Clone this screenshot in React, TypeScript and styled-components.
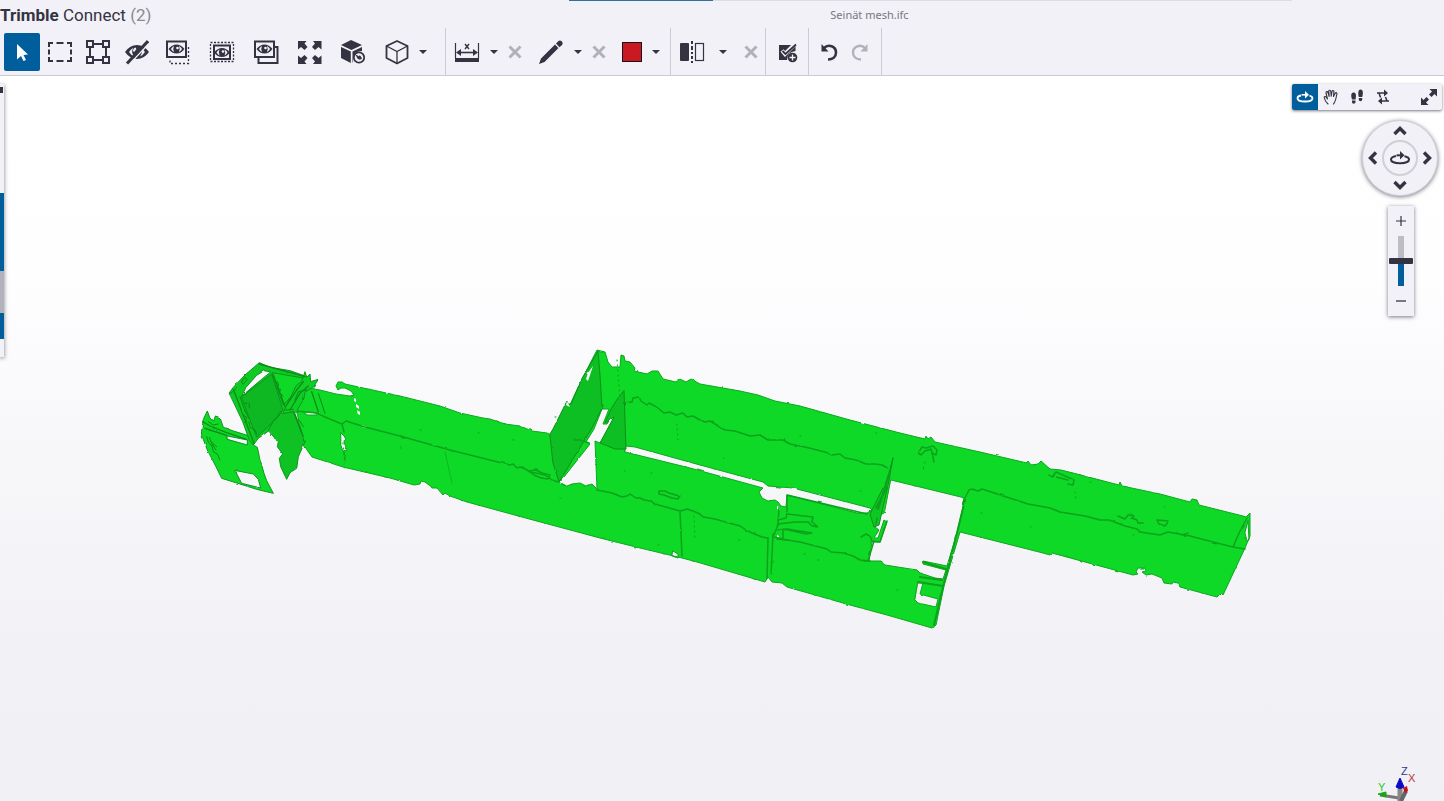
import React, { useState } from "react";
import styled, { createGlobalStyle } from "styled-components";

const INK = "#343342";
const BLUE = "#005e9c";
const PANEL = "#f2f1f7";
const LINE = "#cacbd4";

const GlobalStyle = createGlobalStyle`
  * { box-sizing: border-box; }
  body { margin: 0; background: #f0f0f5; color: ${INK}; font-family: Roboto, "Liberation Sans", sans-serif; }
  button { font: inherit; color: inherit; border: 0; padding: 0; background: none; cursor: pointer; }
`;

const Page = styled.div`
  display: flex;
  flex-direction: column;
  min-height: 100vh;
`;

const Header = styled.header`
  background: ${PANEL};
  border-bottom: 1px solid ${LINE};
`;

const LoadStrip = styled.div`
  display: grid;
  grid-template-columns: 569fr 144fr 579fr 152fr;
  height: 1px;
`;

const LoadPart = styled.div<{ $color: string; $column: number }>`
  grid-column: ${(p) => p.$column};
  background: ${(p) => p.$color};
`;

const TitleRow = styled.div`
  display: grid;
  grid-template-columns: 57.5% 1fr;
  align-items: center;
  height: 27px;
`;

const Brand = styled.h1`
  margin: 0;
  font-size: 17px;
  line-height: 26px;
  font-weight: 400;
  white-space: nowrap;
`;

const Count = styled.span`
  color: #8a8a93;
`;

const FileName = styled.span`
  font-family: "Noto Sans", sans-serif;
  font-size: 11px;
  line-height: 26px;
  color: #77777f;
`;

const Toolbar = styled.div`
  display: flex;
  height: 47px;
`;

const Group = styled.div<{ $gap?: number; $pad: string }>`
  display: flex;
  align-items: center;
  gap: ${(p) => p.$gap ?? 0}px;
  padding: ${(p) => p.$pad};
  border-right: 1px solid ${LINE};
`;

const Cluster = styled.div<{ $gap: number }>`
  display: flex;
  align-items: center;
  gap: ${(p) => p.$gap}px;
`;

const ToolButton = styled.button<{ $width?: number; $active?: boolean }>`
  display: grid;
  place-items: center;
  width: ${(p) => p.$width ?? 36}px;
  height: 38px;
  border-radius: 2px;
  color: ${(p) => (p.$active ? "#fff" : INK)};
  background: ${(p) => (p.$active ? BLUE : "transparent")};
  &:disabled { color: #b1b1b9; cursor: default; }
`;

const Swatch = styled.span`
  width: 20px;
  height: 20px;
  background: #c91a22;
  border: 1px solid #16151d;
`;

const Viewport = styled.main`
  flex: 1;
  display: grid;
  grid-template: minmax(320px, 1fr) / minmax(0, 1fr);
  background: linear-gradient(#fff 0%, #fefeff 28%, #f8f8fb 48%, #f2f2f6 78%, #f0f0f5 100%);
  overflow: hidden;
  & > * { grid-area: 1 / 1; }
`;

const ModelView = styled.svg`
  width: 100%;
  height: 100%;
  min-height: 0;
`;

const SidePanel = styled.aside`
  display: flex;
  flex-direction: column;
  align-self: start;
  width: 4px;
  height: 273px;
  margin-top: 8px;
  padding-top: 3px;
  background: ${PANEL};
  box-shadow: 0 1px 4px rgba(30, 30, 50, 0.6);
  z-index: 1;
`;

const SideBlock = styled.div<{ $height: number; $color: string; $width?: number }>`
  width: ${(p) => p.$width ?? 4}px;
  height: ${(p) => p.$height}px;
  background: ${(p) => p.$color};
`;

const Controls = styled.div`
  display: flex;
  flex-direction: column;
  align-items: flex-end;
  align-self: start;
  justify-self: end;
  gap: 10px;
  padding: 8px 2px;
`;

const NavBar = styled.div`
  display: flex;
  width: 150px;
  height: 26px;
  border-radius: 2px;
  background: ${PANEL};
  box-shadow: 0 1px 3px rgba(30, 30, 50, 0.6);
`;

const NavButton = styled.button<{ $active?: boolean; $end?: boolean }>`
  display: grid;
  place-items: center;
  width: 26px;
  height: 26px;
  margin-left: ${(p) => (p.$end ? "auto" : "0")};
  border-radius: 2px 0 0 2px;
  color: ${(p) => (p.$active ? "#fff" : INK)};
  background: ${(p) => (p.$active ? BLUE : "transparent")};
`;

const Dial = styled.div`
  display: grid;
  grid-template: 20px 34px 20px / 20px 34px 20px;
  place-items: center;
  place-content: center;
  width: 76px;
  height: 76px;
  margin-right: 4px;
  border: 1px solid #d0d0d6;
  border-radius: 50%;
  background: ${PANEL};
  box-shadow: 0 1px 4px rgba(30, 30, 50, 0.6);
`;

const DialButton = styled.button<{ $area: string; $hub?: boolean }>`
  grid-area: ${(p) => p.$area};
  display: grid;
  place-items: center;
  width: ${(p) => (p.$hub ? 36 : 18)}px;
  height: ${(p) => (p.$hub ? 36 : 18)}px;
  border: ${(p) => (p.$hub ? "2px solid #cfcfd6" : "0")};
  border-radius: 50%;
`;

const ZoomBox = styled.div`
  display: flex;
  flex-direction: column;
  align-items: center;
  width: 26px;
  height: 110px;
  margin-right: 28px;
  background: ${PANEL};
  box-shadow: 0 1px 4px rgba(30, 30, 50, 0.6);
`;

const ZoomButton = styled.button`
  display: grid;
  place-items: center;
  width: 26px;
  height: 30px;
`;

const ZoomSlider = styled.input`
  appearance: none;
  writing-mode: vertical-lr;
  direction: rtl;
  width: 24px;
  height: 50px;
  margin: 0;
  background: linear-gradient(#bcbec4 50%, ${BLUE} 50%) center / 6px 100% no-repeat;
  &::-webkit-slider-thumb {
    appearance: none;
    width: 24px;
    height: 6px;
    border-radius: 1px;
    background: ${INK};
  }
`;

const Axes = styled.svg`
  align-self: end;
  justify-self: end;
  width: 74px;
  height: 38px;
  font-family: "Liberation Sans", sans-serif;
  font-size: 11px;
`;

const Icon = ({ size = 26, children }: { size?: number; children: React.ReactNode }) => (
  <svg width={size} height={size} viewBox={`0 0 ${size} ${size}`} fill="none" stroke="currentColor" strokeWidth="2" aria-hidden="true">
    {children}
  </svg>
);

const Eye = ({ x, y }: { x: number; y: number }) => (
  <g transform={`translate(${x} ${y})`} stroke="none">
    <path fill="currentColor" fillRule="evenodd" d="M-8 0Q-4.500-4.500 0-4.500T8 0Q4.500 4.500 0 4.500T-8 0ZM-5.500 0Q-4.500 2-2.500 3Q-4-0.500-2.500-3Q-4.500-2-5.500 0ZM5.500 0Q4.500-2 2.500-3Q4 0.500 2.500 3Q4.500 2 5.500 0Z" />
    <circle cx="1" cy="-1" r="1.300" fill={PANEL} />
  </g>
);

const Caret = ({ label }: { label: string }) => (
  <ToolButton $width={14} aria-label={label}>
    <Icon size={10}><path d="M1 3H9L5 7Z" fill="currentColor" stroke="none" /></Icon>
  </ToolButton>
);

const Clear = ({ label }: { label: string }) => (
  <ToolButton $width={20} disabled aria-label={label}>
    <Icon size={14}><path d="M1.500 1.500L12.500 12.500M12.500 1.500L1.500 12.500" strokeWidth="3" /></Icon>
  </ToolButton>
);

const OrbitIcon = () => (
  <Icon size={20}>
    <path d="M6 8C3 8.600 1 9.800 1 11.400C1 13.700 5 15.200 10 15.200S19 13.700 19 11.400C19 10 17.500 8.800 14.500 8.200" />
    <path d="M6.500 7.300H11" />
    <path d="M10 3L14.500 7.300L10 11.500Z" fill="currentColor" stroke="none" />
  </Icon>
);

const Chevron = ({ turn }: { turn: number }) => (
  <Icon size={16}><path d="M2.500 11L8 5.500L13.500 11" strokeWidth="3.400" transform={`rotate(${turn} 8 8)`} /></Icon>
);

const Model = () => (
  <ModelView viewBox="0 76 1444 725" preserveAspectRatio="xMidYMid slice" role="img" aria-label="Wall mesh model">
    <defs>
      <filter id="rough" x="-2%" y="-2%" width="104%" height="104%">
        <feTurbulence type="fractalNoise" baseFrequency="0.12" numOctaves="2" seed="4" />
        <feDisplacementMap in="SourceGraphic" scale="2" xChannelSelector="R" yChannelSelector="G" />
      </filter>
    </defs>
    <g filter="url(#rough)" strokeLinejoin="round" strokeLinecap="round">
      {/* long walls, with the openings between them */}
      <path
        fill="#0bd926" stroke="#0aa51d" strokeWidth="1" fillRule="evenodd"
        d="M297 411L308 388L320 390L336 394L350 396L354 395L351 391L345 388L341 388L338 390L336 386L338 382L342 382L345 384L400 396L420 401L440 406L460 413L483 418L490 419L505 424L520 426L532 431L547 433L551 435L566 404L569 407L580 383L597 350L605 352L608 362L612 367L620 367L621 355L624 356L625 361L630 362L635 368L634 371L647 374L652 371L658 371L663 379L676 382L680 379L686 382L691 379L700 384L740 391L758 395L775 401L800 406L850 420L900 433L925 439L926 436L928 439L931 437L935 442L980 452L1027 463L1028 461L1031 465L1038 464L1041 461L1050 469L1061 470L1073 473L1119 485L1120 482L1122 486L1160 494L1190 502L1192 499L1197 500L1199 505L1243 516L1246 517L1250 513L1250 536L1245 548L1223 595L1221 593L1217 597L1180 587L1178 583L1173 582L1172 584L1164 583L1162 578L1152 574L1146 575L1142 572L1146 571L1145 568L1138 568L1136 572L1138 574L1133 575L1052 553L1050 555L1043 553L960 532L944 586L936 625L932 628L887 615L850 605L787 587L782 583L772 582L768 577L765 582L697 562L682 558L640 548L600 538L533 520L467 502L450 496L445 493L443 495L437 488L433 488L425 482L421 481L420 484L414 485L390 478L343 467L312 457L307 450L303 443Z
        M560 482L590 444L586 442L594 429L602 409L609 409L603 424L607 424L615 411L615 416L600 443L595 441L597 489L592 484L586 486L580 483L572 484L567 486Z
        M626 446L635 447L700 465L763 482L768 486L793 488L870 508L872 510L867 513L857 513L787 495L786 507L781 506L778 502L775 500L768 501L762 498L759 492L763 488L690 468L625 452Z
        M891 480L965 498L957 533L947 566L923 561L923 564L946 570L943 579L935 578L920 573L917 570L885 565L880 561L869 561L872 542L880 542L887 522L884 520L878 538L874 538L879 530L875 527L876 517L884 513Z
        M918 583L923 583L920 594L938 599L936 607L918 603L915 600Z
        M673 551L678 554L678 558L672 556Z M341 433L345 437L344 442L347 450L343 451L341 446Z M303 412L316 413L317 415L308 415Z M1248 521L1249 540L1247 541L1245 533Z"
      />
      {/* small gaps in the left wall */}
      <path fill="#fbfbfd" d="M354 398L356 399V402L354 401ZM356 404L359 406L359 409L356 407ZM357 410L360 412L360 415L358 414ZM362 425L367 427L366 428L362 427ZM777 506L780 507V510L777 509ZM777 535L779 536V538L777 537Z" />
      {/* shaded walls facing away */}
      <g fill="#0bbf22" stroke="#098f1b" strokeWidth="1">
        <path d="M550 434L553 429L565 405L567 401L568 404L571 404L578 388L580 382L587 370L598 351L600 375L602 408L592 428L559 482L553 463Z" />
        <path d="M624 391L626 449L615 449L600 443L614 417L605 423L611 409L618 398Z" />
        <path fill="#0bc824" d="M893 458L889 480L879 525L874 527L870 514L877 500L887 480Z" />
      </g>
      <path fill="#fff" d="M593 366L588 373L586 379L588 381L590 375ZM567 401L570 407L566 405Z" />

      {/* end room on the left */}
      <g transform="translate(190 350) scale(0.333333)">
        <g stroke="#0a941c" strokeWidth="3">
          <path fill="#0bd926" fillRule="evenodd" d="M35 242L40 208L52 183L60 205L72 212L76 198L90 203L100 232L130 243L172 256L190 285L202 292L208 320L216 348L222 370L230 392L250 430L200 418L150 402L95 385L78 350L52 300L35 255ZM112 258L172 270L172 285L112 268ZM138 362L190 372L205 388L212 414L155 400L142 375Z" />
          <path fill="#0acb23" fillRule="evenodd" d="M118 128L130 112L165 75L208 38L240 52L300 62L345 78L360 92L320 170L280 180L240 240L205 265L190 285L178 270L158 215ZM155 138L168 112L200 76L222 62L242 66L215 88Z" />
          <path fill="#0ab820" d="M155 140L245 72L262 125L278 180L240 225L200 262L180 210Z" />
          <path fill="#0bd926" d="M248 68L345 85L335 105L280 165L262 115Z" />
          <path fill="#0ac222" d="M235 240L250 215L275 190L312 184L330 230L345 275L325 320L320 355L300 368L290 388L272 350L268 325L278 312L262 290L265 275L255 265Z" />
          <path fill="#0bcf25" d="M278 190L300 145L320 105L335 95L345 65L350 82L360 72L362 95L385 88L370 112L345 125L340 150L320 182Z" />
        </g>
        <g fill="none" stroke="#088b19">
          <path strokeWidth="4" d="M130 118L192 280M208 42L345 80M250 75L285 170M38 215L60 228L110 248L170 268M45 235L60 240L110 256M312 188L345 275M365 125L385 185M300 180L330 130L355 108M290 165L320 120L340 95" />
          <path strokeWidth="3" d="M120 132L140 115M155 95L165 82L172 88L160 102ZM315 150L325 125L350 120M262 95L266 105L262 112L272 118L268 128L280 138M165 160Q182 155 178 172M160 195L170 202L166 212L178 218L180 232L195 240L200 252M50 260L56 280L66 288L70 305L82 312L90 330M58 262L66 282L78 300M62 275L80 290M55 215L70 225L85 222M325 205L340 230M385 130L405 190M285 180L310 178M150 140L162 175L176 205" />
        </g>
      </g>

      {/* edges and cracks drawn on the walls */}
      <g fill="none" stroke="#0ba21e" strokeWidth="1.500">
        <path d="M297 411L317 413L325 417L337 422L342 424L346 421L365 427L400 436L450 450L510 465L513 464L517 468L522 467L530 472L536 473L545 475L552 480L558 482M342 424L344 432M344 452L345 460M597 490L612 493L622 497L627 496L630 494L636 498L640 498L644 500L650 501L655 504L680 511L684 510L687 509L693 511L700 514L703 517L715 519L740 526L746 530L752 533L762 537L768 538M774 537L787 540L800 542L827 549L831 552L844 553L853 556L860 560L870 561" />
        <path d="M623 403L632 402L633 398L639 397L641 401L647 405L649 403L655 406L658 408L664 413L670 412L676 415L683 413L687 417L693 416L700 420L705 422L710 421L725 430L735 431L750 436L760 435L768 440L783 440L790 444L805 447L825 452L832 455L840 454L845 458L856 460L866 464L875 464L882 465L888 468" />
        <path d="M965 498L969 490L972 489L978 491L982 489L1028 504L1050 508L1060 512L1085 516L1100 520L1109 520L1125 526L1137 529L1140 532L1160 535L1168 532L1190 536L1233 547L1245 549M1233 547L1240 531L1247 518" />
        <path d="M787 495V512M787 495L867 514M768 538L767 579M773 534L771 574M779 507L778 525L774 535M680 511L682 556" />
        <path d="M659 491L665 491L669 493L679 496L678 499L672 498L664 495L659 494ZM529 471L536 470L542 473L550 475L548 479L541 478L534 475ZM574 440L580 440L589 443" />
        <path d="M778 520L786 518L787 514L813 517L812 522L818 527L812 526L808 522L795 522L778 524M778 530L788 529L793 530L812 533L806 534L784 529M783 529V540M777 539L788 540" />
        <path d="M861 537L866 534L870 536L872 541L880 542L887 521M877 518L876 524" />
        <path d="M919 452L922 447L926 448L933 446L937 450L936 455L932 453M919 452L921 455L925 451L931 449L933 457L934 462M1049 475L1052 477L1056 472L1074 480L1073 485L1068 484M1056 477L1068 480M1118 516L1125 519L1129 514L1134 516L1132 518L1137 520L1138 523L1143 523M1157 520L1169 521L1165 526L1159 524ZM1182 535L1188 533" />
        <path strokeWidth="2" d="M923 562L946 569M918 582L943 586M920 577L942 580" />
        <path strokeWidth="2" d="M889 474L881 500L878 510M887 487L876 508M965 500L957 533L944 583L934 625" />
        <path d="M863 561L868 561L874 541" />
      </g>
      <g fill="none" stroke="#0ba21e" strokeWidth="1">
        <path strokeDasharray="1 4" d="M343 443L345 468M617 360L620 398M677 424L678 442M694 516L695 540M1075 492L1076 500M925 462L923 470" />
        <path strokeWidth="1" opacity="0.6" d="M445 452L452 483" />
        <path d="M513 440H514M478 433H479M555 417H556M420 430H421M624 471H625M651 473H652M723 458H724M860 491H861M777 525H778M804 554H805M818 560H819M981 513H982M1030 527H1031M1133 535H1134M1164 507H1165M658 545H659M560 498H561M400 448H401M800 436H801M876 433H877M1090 482H1091M897 590H898M739 540H740" />
      </g>
    </g>
  </ModelView>
);

export default function App() {
  const [zoom, setZoom] = useState(50);
  return (
    <Page>
      <GlobalStyle />
      <Header>
        <LoadStrip>
          <LoadPart $column={2} $color="#2f7299" />
          <LoadPart $column={3} $color="#dddde4" />
        </LoadStrip>
        <TitleRow>
          <Brand><b>Trimble</b> Connect <Count>(2)</Count></Brand>
          <FileName>Seinät mesh.ifc</FileName>
        </TitleRow>
        <Toolbar role="toolbar" aria-label="Model tools">
          <Group $gap={6} $pad="0 15px 0 4px">
            <Cluster $gap={2}>
              <ToolButton $active aria-label="Select">
                <Icon><path d="M8 5L19 15.500L14.500 16L17 21L14.500 22L12 17L8 20.500Z" fill="currentColor" stroke="none" /></Icon>
              </ToolButton>
              <ToolButton aria-label="Rectangle select">
                <Icon><path d="M2 8V4H6M9.500 4H16.500M20 4H24V8M24 10.500V15.500M24 18V22H20M16.500 22H9.500M6 22H2V18M2 15.500V10.500" /></Icon>
              </ToolButton>
              <ToolButton aria-label="Polygon select">
                <Icon><path d="M2 2H8V8H2ZM18 2H24V8H18ZM2 18H8V24H2ZM18 18H24V24H18ZM8 5H18M8 21H18M5 8V18M21 8V18" /></Icon>
              </ToolButton>
              <ToolButton aria-label="Hide">
                <Icon>
                  <path fill="currentColor" stroke="none" fillRule="evenodd" d="M2 13Q7 6 14 6T26 13Q21 20 14 20T2 13ZM6 13Q8 16 11 17.500Q7.500 13 10.500 8.800Q7.800 10 6 13ZM22 13Q20 10 17.500 8.800Q20.500 13 17 17.500Q20 16 22 13Z" />
                  <path d="M13 9.500A3 3 0 0 0 11 12.500" stroke={PANEL} />
                  <path d="M6.500 25L26 4.500" stroke={PANEL} strokeWidth="1.500" />
                  <path d="M4 24.500L25 2" strokeWidth="3" />
                </Icon>
              </ToolButton>
            </Cluster>
            <Cluster $gap={0}>
              <Cluster $gap={8}>
                <ToolButton aria-label="Hide others">
                  <Icon><path d="M2 2.500H21V18H2Z" /><Eye x={11.5} y={10} /><path d="M23.500 8V24.500H5V20" strokeWidth="1.300" strokeDasharray="2 2" /></Icon>
                </ToolButton>
                <ToolButton aria-label="Isolate">
                  <Icon><path d="M1.500 3.500H24.500V22.500H1.500Z" strokeWidth="1.300" strokeDasharray="2 1.500" /><path d="M5 6.500H21V20H5Z" /><Eye x={13} y={13.5} /></Icon>
                </ToolButton>
                <ToolButton aria-label="Show all">
                  <Icon><path d="M2 2.500H21V18H2Z" /><Eye x={11.5} y={10} /><path d="M21 8H24.500V24H5.500V18" /></Icon>
                </ToolButton>
                <ToolButton aria-label="Fit to view">
                  <Icon>
                    <path fill="currentColor" stroke="none" d="M1 2H9.500L7.500 4.500L10.500 8L7.500 11L4 8L1 10.500ZM24.500 2H16L18 4.500L15 8L18 11L21.500 8L24.500 10.500ZM1 25H9.500L7.500 22.500L10.500 19L7.500 16L4 19L1 16.500ZM24.500 25H16L18 22.500L15 19L18 16L21.500 19L24.500 16.500Z" />
                  </Icon>
                </ToolButton>
                <ToolButton aria-label="Reset model">
                  <Icon>
                    <path fill="currentColor" stroke="none" d="M0 6L10 1L21 6L10.500 11ZM0 8L9.800 12.500V24L0 19ZM11.500 12.500L21 8V12Q13 12 12 19V23L11.500 24Z" />
                    <circle cx="18" cy="18.500" r="5.200" strokeWidth="1.800" />
                    <path d="M15.500 16L17 19Q19 21 20.500 18.500" strokeWidth="1.500" /><circle cx="18.500" cy="18" r="1.600" fill="currentColor" stroke="none" />
                  </Icon>
                </ToolButton>
                <ToolButton aria-label="View cube">
                  <Icon><path d="M12 2L22.500 7V19L12 24.500L1.500 19V7Z" strokeWidth="1.800" strokeLinejoin="round" /><path d="M1.500 7L12 12.500L22.500 7M12 12.500V24.500" strokeWidth="1.300" /></Icon>
                </ToolButton>
              </Cluster>
              <Caret label="View options" />
            </Cluster>
          </Group>

          <Group $gap={8} $pad="0 7px 0 3px">
            <Cluster $gap={4}>
              <Cluster $gap={2}>
                <ToolButton aria-label="Measure">
                  <Icon>
                    <path d="M1.500 4V19M24.500 4V19" strokeWidth="1.200" /><path d="M4 13.500H22" strokeWidth="1.600" />
                    <path d="M1 19H25V23H1ZM2 13.500L7 10V17ZM24 13.500L19 10V17Z" fill="currentColor" stroke="none" />
                    <path d="M11 5L15 10M15 5L11 10" strokeWidth="1.400" />
                  </Icon>
                </ToolButton>
                <Caret label="Measure options" />
              </Cluster>
              <Clear label="Clear measurements" />
            </Cluster>
            <Cluster $gap={4}>
              <Cluster $gap={2}>
                <ToolButton aria-label="Markup">
                  <Icon><path fill="currentColor" stroke="none" d="M1 25L3 19.500L17 5.500L20.500 9L6.500 23ZM18 4.500L20.500 2Q22 1 24 2.500Q25.500 4.500 24 6L21.500 8.200Z" /></Icon>
                </ToolButton>
                <Caret label="Markup options" />
              </Cluster>
              <Clear label="Clear markups" />
            </Cluster>
            <Cluster $gap={2}>
              <ToolButton $width={30} aria-label="Markup color"><Swatch /></ToolButton>
              <Caret label="Color options" />
            </Cluster>
          </Group>

          <Group $gap={11} $pad="0 4px 0 3px">
            <Cluster $gap={6}>
              <ToolButton aria-label="Clip plane">
                <Icon>
                  <rect x="1" y="4" width="9" height="18" rx="1" fill="currentColor" stroke="none" />
                  <path d="M13 2V5M13 7V11M13 13V15M13 17V20M13 22V24" />
                  <rect x="16.500" y="4.500" width="8" height="17" strokeWidth="1.200" />
                </Icon>
              </ToolButton>
              <Caret label="Clip plane options" />
            </Cluster>
            <Clear label="Clear clip planes" />
          </Group>

          <Group $pad="0 3px">
            <ToolButton aria-label="Add to-do">
              <Icon>
                <path d="M5 6H21.500V12Q13 13 13 21H5Z" fill="currentColor" stroke="none" />
                <path d="M8 11.500L11 15L21.500 4.500" stroke={PANEL} strokeWidth="4" />
                <path d="M8.500 12L11.500 15L22 5.500" strokeWidth="1.800" />
                <circle cx="18.500" cy="18.500" r="4.800" fill="currentColor" stroke="none" />
                <path d="M15.500 18.500H21.500M18.500 15.500V21.500" stroke={PANEL} strokeWidth="1.300" />
              </Icon>
            </ToolButton>
          </Group>

          <Group $gap={1} $pad="0 6px 0 5px">
            <ToolButton $width={30} aria-label="Undo">
              <Icon size={20}><path d="M5 6C9.500 1.500 17 4.500 17 10.500C17 15 13.500 17.500 9 17.500" strokeWidth="2.600" /><path d="M2.500 2V9.500H9.500Z" fill="currentColor" stroke="none" /></Icon>
            </ToolButton>
            <ToolButton $width={30} disabled aria-label="Redo">
              <Icon size={20}><path d="M15 6C10.500 1.500 3 4.500 3 10.500C3 15 6.500 17.500 11 17.500" strokeWidth="2.400" /><path d="M17.500 2V9.500H10.500Z" fill="currentColor" stroke="none" /></Icon>
            </ToolButton>
          </Group>
        </Toolbar>
      </Header>

      <Viewport>
        <Model />
        <SidePanel aria-label="Collapsed panel">
          <SideBlock $height={6} $width={3} $color={INK} />
          <SideBlock $height={100} $color="transparent" />
          <SideBlock $height={78} $color={BLUE} />
          <SideBlock $height={42} $color="#b2b3ba" />
          <SideBlock $height={26} $color={BLUE} />
        </SidePanel>
        <Controls>
          <NavBar role="toolbar" aria-label="Navigation">
            <NavButton $active aria-label="Orbit"><Icon size={18}><path strokeWidth="1.800" d="M5 7.500C2.500 8 1.500 9 1.500 10.200C1.500 12.300 5 13.500 9 13.500S16.500 12.300 16.500 10.200C16.500 9 15.500 8.200 13.500 7.600" /><path strokeWidth="1.600" d="M5.500 6.800H10" /><path d="M9 3L13 6.800L9 10.500Z" fill="currentColor" stroke="none" /></Icon></NavButton>
            <NavButton aria-label="Pan">
              <Icon size={16}><path strokeWidth="1.100" strokeLinejoin="round" strokeLinecap="round" d="M5 15C3 13 1.500 10.500 1.200 8.500C1 7.300 2.500 7 3.200 8.200L4.500 10L3 4C2.700 2.500 4.500 2 5 3.500L6.200 7.500L5.800 2.300C5.700 0.800 7.700 0.800 7.800 2.300L8.200 7.200L9 2.500C9.300 1 11 1.300 10.900 2.700L10.500 7.500L12.200 4.300C12.900 3 14.300 3.700 13.900 5L12.800 10C12.300 12.500 11.500 13.500 10.500 15" /></Icon>
            </NavButton>
            <NavButton aria-label="Walk">
              <Icon size={16}><path fill="currentColor" stroke="none" d="M4.500 3.500C7 3.500 7.500 6 6.500 10.500H3C1.800 6.500 2 3.500 4.500 3.500ZM3 11.500H6.500V13C6.500 15.300 3 15.300 3 13ZM11.500 0.500C14 0.500 14.500 3.500 13.200 8H9.800C8.800 3.500 9.300 0.500 11.500 0.500ZM9.800 9H13.200V10.500C13.200 12.800 9.800 12.800 9.800 10.500Z" /></Icon>
            </NavButton>
            <NavButton aria-label="Look around">
              <Icon size={16}><path d="M2 4H10M14 12H6M5.500 8.500L4 4M10.500 8L12 12" strokeWidth="1.500" /><path d="M9 0.500L13 4L9 7.500ZM7 8.500L3 12L7 15.500Z" fill="currentColor" stroke="none" /></Icon>
            </NavButton>
            <NavButton $end aria-label="Full screen">
              <Icon size={18}><path fill="currentColor" stroke="none" d="M9.500 1H17V8.500L14.500 6L11.500 9L9 6.500L12 3.500ZM1 9.500V17H8.500L6 14.500L9 11.500L6.500 9L3.500 12Z" /></Icon>
            </NavButton>
          </NavBar>
          <Dial>
            <DialButton $area="1 / 2" aria-label="Rotate up"><Chevron turn={0} /></DialButton>
            <DialButton $area="2 / 1" aria-label="Rotate left"><Chevron turn={270} /></DialButton>
            <DialButton $area="2 / 2" $hub aria-label="Orbit mode"><OrbitIcon /></DialButton>
            <DialButton $area="2 / 3" aria-label="Rotate right"><Chevron turn={90} /></DialButton>
            <DialButton $area="3 / 2" aria-label="Rotate down"><Chevron turn={180} /></DialButton>
          </Dial>
          <ZoomBox>
            <ZoomButton aria-label="Zoom in" onClick={() => setZoom(Math.min(100, zoom + 10))}><Icon size={12}><path d="M1 6H11M6 1V11" strokeWidth="1.200" /></Icon></ZoomButton>
            <ZoomSlider type="range" aria-label="Zoom" value={zoom} onChange={(e) => setZoom(Number(e.target.value))} />
            <ZoomButton aria-label="Zoom out" onClick={() => setZoom(Math.max(0, zoom - 10))}><Icon size={12}><path d="M1 6H11" strokeWidth="1.300" /></Icon></ZoomButton>
          </ZoomBox>
        </Controls>
        <Axes viewBox="0 0 74 38" aria-label="Axes">
          <path d="M29 35L10 32" stroke="#777" strokeWidth="3" />
          <path d="M30 38V24" stroke="#888" strokeWidth="5" />
          <path d="M31 38L36 28" stroke="#666" strokeWidth="4" />
          <path d="M33 25L37 23L38 28L35 30Z" fill="#c4101c" />
          <path d="M8 31L16 29V34Z" fill="#12a812" stroke="#12a812" />
          <path d="M30 15L34 24Q30 27 26 24Z" fill="#0a0ac8" stroke="#0a0ac8" />
          <text x="31" y="12" fill="#34349c">Z</text>
          <text x="38" y="19" fill="#b83440">X</text>
          <text x="8" y="28" fill="#2cc82c">Y</text>
        </Axes>
      </Viewport>
    </Page>
  );
}
